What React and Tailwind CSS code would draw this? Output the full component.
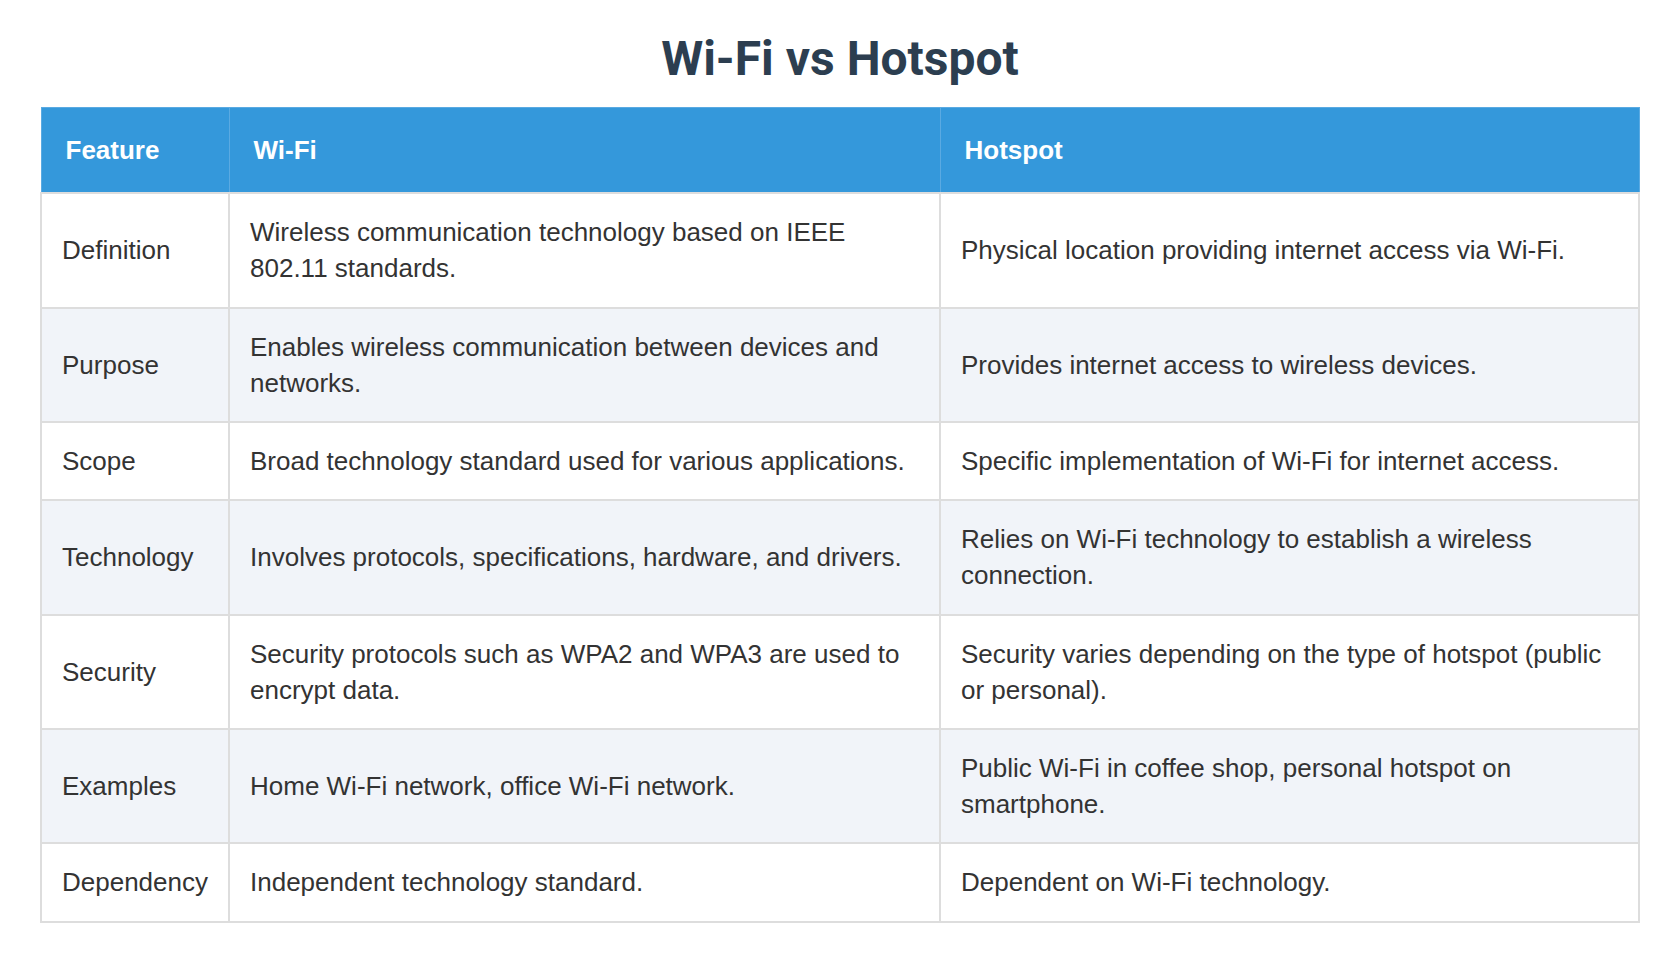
import React from 'react';

// Comparison rows: [feature, wifi, hotspot]
const rows = [
  ['Definition', 'Wireless communication technology based on IEEE 802.11 standards.', 'Physical location providing internet access via Wi-Fi.'],
  ['Purpose', 'Enables wireless communication between devices and networks.', 'Provides internet access to wireless devices.'],
  ['Scope', 'Broad technology standard used for various applications.', 'Specific implementation of Wi-Fi for internet access.'],
  ['Technology', 'Involves protocols, specifications, hardware, and drivers.', 'Relies on Wi-Fi technology to establish a wireless connection.'],
  ['Security', 'Security protocols such as WPA2 and WPA3 are used to encrypt data.', 'Security varies depending on the type of hotspot (public or personal).'],
  ['Examples', 'Home Wi-Fi network, office Wi-Fi network.', 'Public Wi-Fi in coffee shop, personal hotspot on smartphone.'],
  ['Dependency', 'Independent technology standard.', 'Dependent on Wi-Fi technology.'],
];

const App = () => {
  return (
    <div className="min-h-screen bg-white px-10 pt-8 font-['Liberation_Sans',Arial,sans-serif]">
      <h1 className="text-center font-['Roboto',sans-serif] text-[48px] font-bold leading-[54px] text-[#2c3e50]">
        Wi-Fi vs Hotspot
      </h1>

      <table className="mt-[21px] w-full table-fixed border-collapse text-[26px] leading-[36.2px] text-[#333333]">
        <thead>
          <tr className="bg-[#3498db] text-left text-white">
            <th className="w-[188px] border border-[#5aaae2] px-6 py-6 font-bold">Feature</th>
            <th className="w-[711px] border border-[#5aaae2] px-6 py-6 font-bold">Wi-Fi</th>
            <th className="border border-[#5aaae2] px-6 py-6 font-bold">Hotspot</th>
          </tr>
        </thead>
        <tbody>
          {rows.map((row, i) => (
            <tr key={row[0]} className={i % 2 === 1 ? 'bg-[#f1f4f9]' : 'bg-white'}>
              {row.map((cell, j) => (
                <td key={j} className="border-2 border-[#dddddd] px-5 py-5 align-middle">
                  {cell}
                </td>
              ))}
            </tr>
          ))}
        </tbody>
      </table>
    </div>
  );
};

export default App;
